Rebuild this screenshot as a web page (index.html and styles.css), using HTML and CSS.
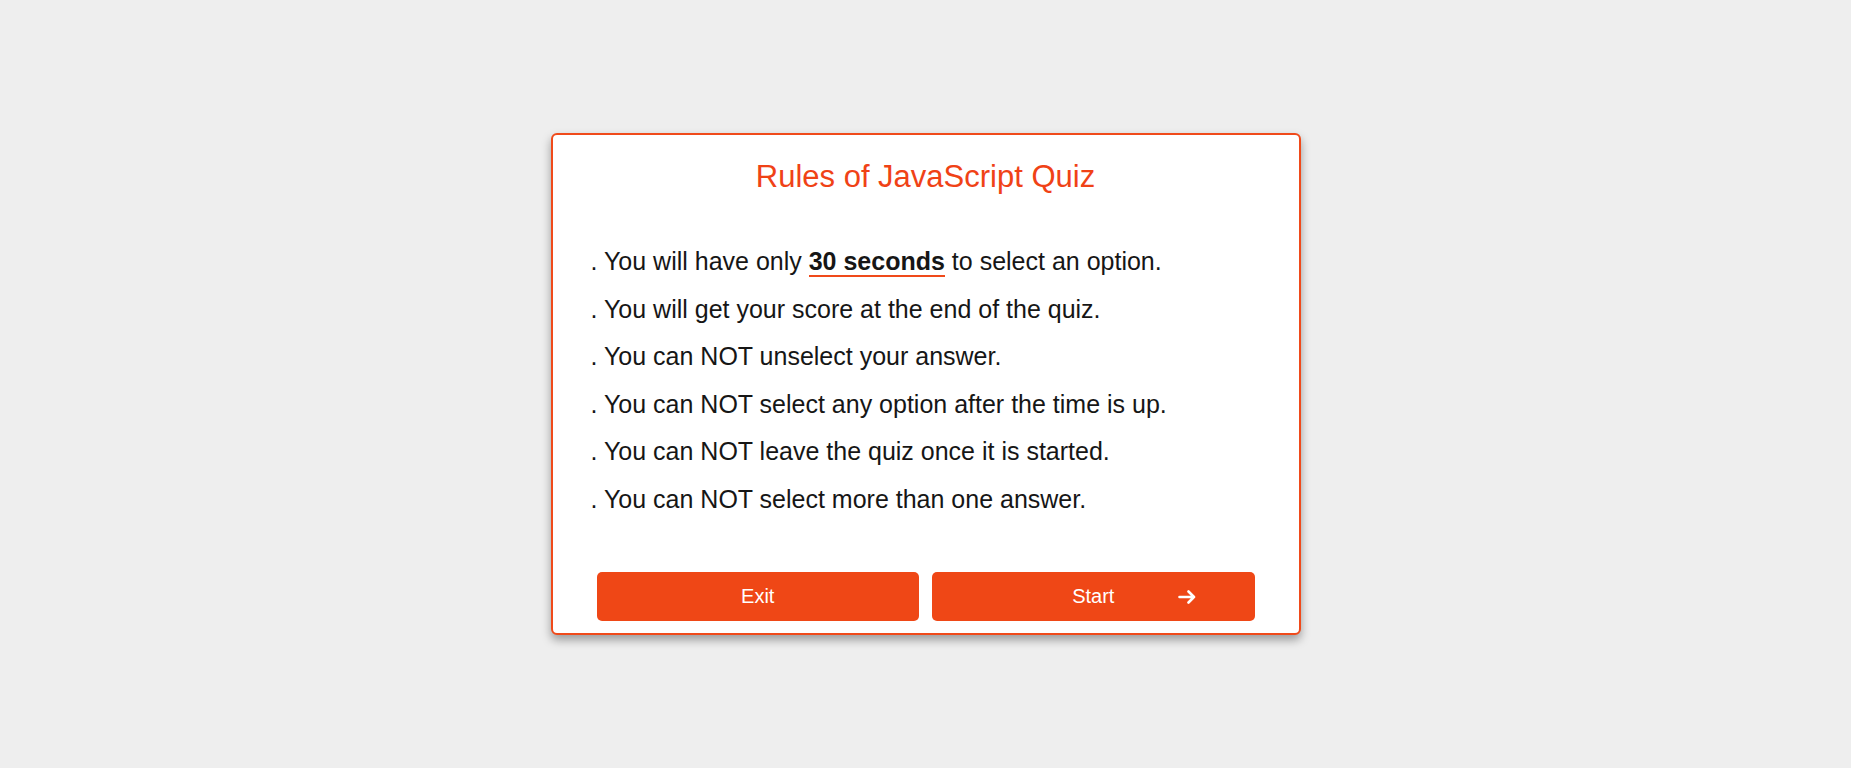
FILE: index.html
```html
<!DOCTYPE html>
<html lang="en">
<head>
    <meta charset="UTF-8">
    <meta name="viewport" content="width=device-width, initial-scale=1.0">
    <title>JavaScript Quiz</title>
    <link rel="stylesheet" href="styles.css">
</head>
<body>
    <div class="rules-box">
        <h1 class="rules-title">Rules of JavaScript Quiz</h1>

        <ul class="rules-list">
            <li>. You will have only <span class="highlight">30 seconds</span> to select an option.</li>
            <li>. You will get your score at the end of the quiz.</li>
            <li>. You can NOT unselect your answer.</li>
            <li>. You can NOT select any option after the time is up.</li>
            <li>. You can NOT leave the quiz once it is started.</li>
            <li>. You can NOT select more than one answer.</li>
        </ul>

        <div class="rules-buttons">
            <button type="button" class="quiz-btn">Exit</button>
            <button type="button" class="quiz-btn start-btn">
                Start
                <svg class="start-icon" width="18" height="14" viewBox="0 0 18 14" fill="none" stroke="#fff" stroke-width="2.6" stroke-linecap="round" stroke-linejoin="round">
                    <path d="M1.5 7H16M10.5 1.5L16 7l-5.5 5.5"/>
                </svg>
            </button>
        </div>
    </div>
</body>
</html>
```

FILE: styles.css
```css
body {
    margin: 0;
    height: 100vh;
    background: #eeeeee;
    font-family: "Liberation Sans", Arial, sans-serif;
    display: flex;
    align-items: center;
    justify-content: center;
}
.rules-box {
    width: 750px;
    box-sizing: border-box;
    background: #fff;
    border: 2px solid #f04a1a;
    border-radius: 6px;
    box-shadow: 0 5px 10px rgba(0, 0, 0, 0.35);
    padding: 22px 44px 12px;
}
.rules-title {
    margin: 0;
    font-size: 31px;
    font-weight: normal;
    line-height: 40px;
    text-align: center;
    color: #f04216;
}
.rules-list {
    list-style: none;
    margin: 41px 0 49px -6px;
    padding: 0;
}
.rules-list li {
    font-size: 25px;
    line-height: 47.5px;
    color: #161616;
}
.highlight {
    font-weight: bold;
    border-bottom: 2px solid #f04a1a;
}
.rules-buttons {
    display: flex;
    gap: 13px;
}
.quiz-btn {
    flex: 1;
    position: relative;
    height: 49px;
    border: none;
    border-radius: 5px;
    background: #ef4716;
    color: #fff;
    font-family: inherit;
    font-size: 20px;
    cursor: pointer;
}
.quiz-btn:hover {
    background: #d93c0f;
}
.start-icon {
    position: absolute;
    right: 59px;
    top: 50%;
    margin-top: -7px;
}
```
